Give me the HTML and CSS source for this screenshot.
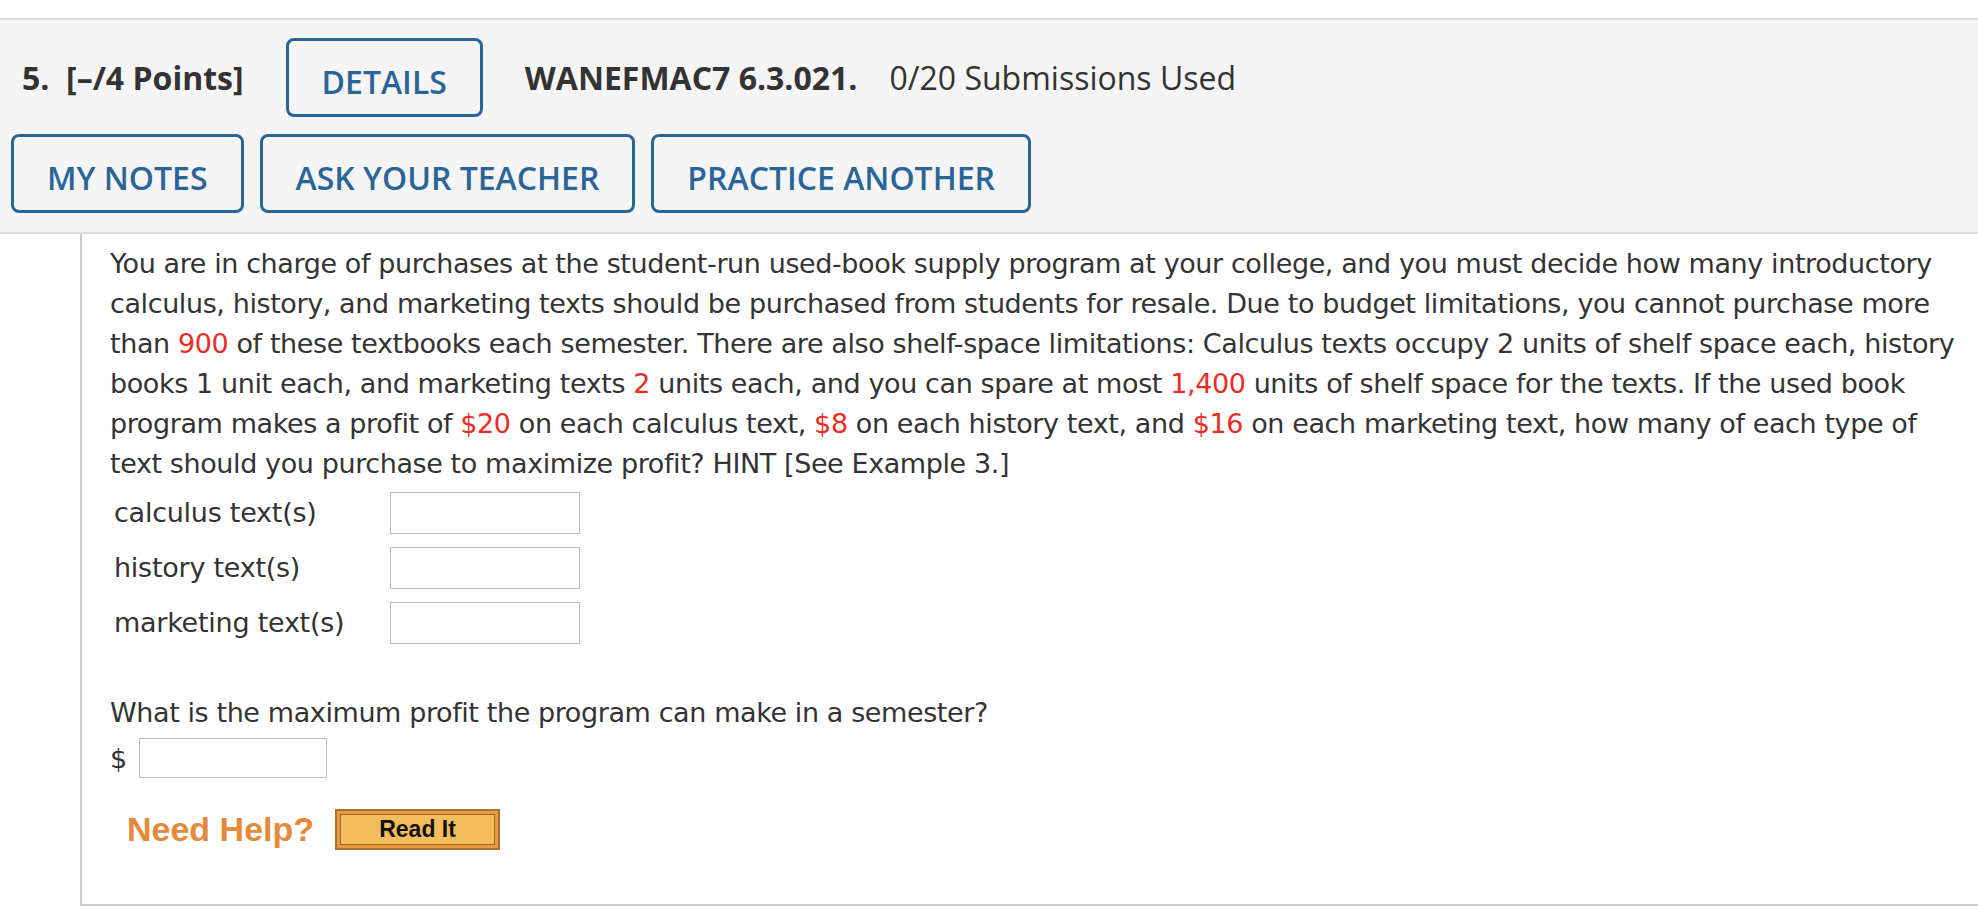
FILE: index.html
```html
<!DOCTYPE html>
<html>
<head>
<meta charset="utf-8">
<link rel="stylesheet" href="styles.css">
</head>
<body>
<div class="question">
  <div class="qhead">
    <div class="qrow">
      <span class="qnum">5.&nbsp; [–/4 Points]</span>
      <span class="btn">DETAILS</span>
      <span class="qcode">WANEFMAC7 6.3.021.</span>
      <span class="qsub">0/20 Submissions Used</span>
    </div>
    <div class="qrow qrow2">
      <span class="btn">MY NOTES</span>
      <span class="btn">ASK YOUR TEACHER</span>
      <span class="btn">PRACTICE ANOTHER</span>
    </div>
  </div>
  <div class="qbody">
    <p class="prob">You are in charge of purchases at the student-run used-book supply program at your college, and you must decide how many introductory<br>calculus, history, and marketing texts should be purchased from students for resale. Due to budget limitations, you cannot purchase more<br>than <span class="red">900</span> of these textbooks each semester. There are also shelf-space limitations: Calculus texts occupy 2 units of shelf space each, history<br>books 1 unit each, and marketing texts <span class="red">2</span> units each, and you can spare at most <span class="red">1,400</span> units of shelf space for the texts. If the used book<br>program makes a profit of <span class="red">$20</span> on each calculus text, <span class="red">$8</span> on each history text, and <span class="red">$16</span> on each marketing text, how many of each type of<br>text should you purchase to maximize profit? HINT [See Example 3.]</p>
    <div class="answers">
      <div class="arow"><span class="alabel">calculus text(s)</span><span class="inp"></span></div>
      <div class="arow"><span class="alabel">history text(s)</span><span class="inp"></span></div>
      <div class="arow"><span class="alabel">marketing text(s)</span><span class="inp"></span></div>
    </div>
    <p class="prob q2">What is the maximum profit the program can make in a semester?</p>
    <div class="dollar"><span class="dsign">$</span><span class="inp inp2"></span></div>
    <div class="help">
      <span class="needhelp">Need Help?</span>
      <span class="readit"><span class="readit-in">Read It</span></span>
    </div>
  </div>
</div>
</body>
</html>
```

FILE: styles.css
```css
html, body {
  margin: 0;
  padding: 0;
  background: #ffffff;
}
.question {
  padding-top: 18px;
}
.qhead {
  background: #f5f5f5;
  border-top: 2px solid #dddddd;
  border-bottom: 2px solid #dddddd;
  padding: 18px 12px 19px 11px;
  font-family: "Open Sans", sans-serif;
  color: #333333;
}
.qrow {
  display: flex;
  align-items: center;
}
.qrow2 {
  margin-top: 17px;
  gap: 16px;
}
.qnum {
  font-weight: 700;
  font-size: 32px;
  margin-left: 11px;
  margin-right: 42px;
  white-space: pre;
}
.qcode {
  font-weight: 700;
  font-size: 32px;
  margin-left: 42px;
  margin-right: 32px;
}
.qsub {
  font-size: 32px;
  font-weight: 400;
}
.btn {
  display: inline-block;
  border: 3px solid #2a6597;
  border-radius: 8px;
  padding: 19px 33px 10px 33px;
  line-height: 44px;
  font-size: 32px;
  font-weight: 600;
  color: #2a6597;
  white-space: nowrap;
}
.qbody {
  margin-left: 80px;
  border-left: 2px solid #cccccc;
  border-bottom: 2px solid #cccccc;
  padding: 10px 0 54px 28px;
  font-family: "DejaVu Sans", Verdana, sans-serif;
  color: #333333;
}
.prob {
  margin: 0;
  font-size: 27px;
  letter-spacing: -0.4px;
  line-height: 40px;
  white-space: nowrap;
}
.red {
  color: #ee2a24;
}
.answers {
  margin-top: 1px;
}
.arow {
  display: flex;
  align-items: center;
  height: 55px;
}
.alabel {
  width: 276px;
  padding-left: 4px;
  font-size: 27px;
  letter-spacing: -0.25px;
}
.inp {
  display: inline-block;
  width: 188px;
  height: 40px;
  border: 1px solid #bbbbbb;
  background: #ffffff;
}
.q2 {
  margin-top: 43px;
}
.dollar {
  display: flex;
  align-items: center;
  margin-top: 5px;
  gap: 12px;
}
.dsign {
  font-size: 27px;
}
.inp2 {
  width: 186px;
  height: 38px;
}
.help {
  display: flex;
  align-items: center;
  margin-top: 31px;
  padding-left: 17px;
  gap: 21px;
}
.needhelp {
  font-family: "Liberation Sans", Arial, sans-serif;
  font-weight: 700;
  font-size: 34px;
  color: #e5893a;
}
.readit {
  display: inline-block;
  width: 165px;
  height: 41px;
  box-sizing: border-box;
  border: 2px solid #a8722f;
  background: #e8993e;
  padding: 3px;
}
.readit-in {
  display: flex;
  align-items: center;
  justify-content: center;
  height: 100%;
  box-sizing: border-box;
  border: 1px solid #9b6a2a;
  background: #f3bd5c;
  font-family: "Liberation Sans", Arial, sans-serif;
  font-weight: 700;
  font-size: 23px;
  color: #111111;
}
```
